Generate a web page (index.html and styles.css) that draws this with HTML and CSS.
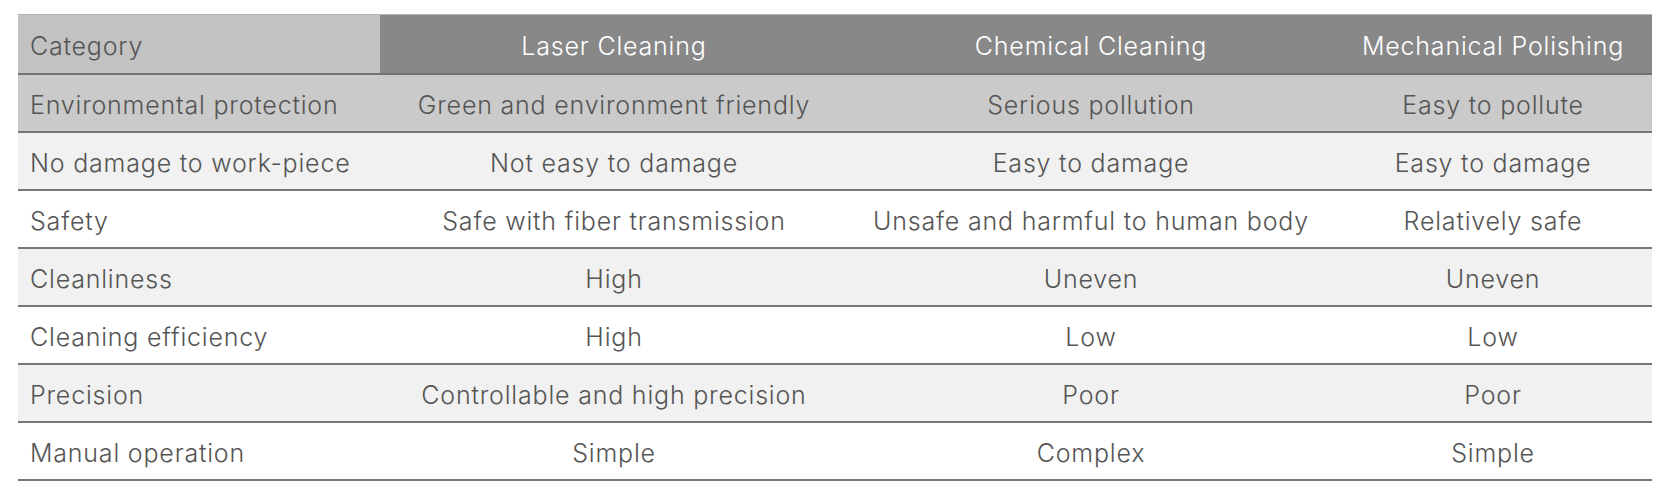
FILE: index.html
```html
<!DOCTYPE html>
<html lang="en">
<head>
<meta charset="utf-8">
<title>Cleaning comparison</title>
<link rel="stylesheet" href="styles.css">
</head>
<body>
<div class="page">
<table class="compare">
  <colgroup>
    <col class="c1"><col class="c2"><col class="c3"><col class="c4">
  </colgroup>
  <thead>
    <tr>
      <th class="cat">Category</th>
      <th>Laser Cleaning</th>
      <th>Chemical Cleaning</th>
      <th>Mechanical Polishing</th>
    </tr>
  </thead>
  <tbody>
    <tr class="first"><td>Environmental protection</td><td>Green and environment friendly</td><td>Serious pollution</td><td>Easy to pollute</td></tr>
    <tr class="alt"><td>No damage to work-piece</td><td>Not easy to damage</td><td>Easy to damage</td><td>Easy to damage</td></tr>
    <tr><td>Safety</td><td>Safe with fiber transmission</td><td>Unsafe and harmful to human body</td><td>Relatively safe</td></tr>
    <tr class="alt"><td>Cleanliness</td><td>High</td><td>Uneven</td><td>Uneven</td></tr>
    <tr><td>Cleaning efficiency</td><td>High</td><td>Low</td><td>Low</td></tr>
    <tr class="alt"><td>Precision</td><td>Controllable and high precision</td><td>Poor</td><td>Poor</td></tr>
    <tr><td>Manual operation</td><td>Simple</td><td>Complex</td><td>Simple</td></tr>
  </tbody>
</table>
</div>
</body>
</html>
```

FILE: styles.css
```css
html, body {
  margin: 0;
  padding: 0;
  background: #ffffff;
}

.page {
  padding: 14px 13px 0 18px;
}

.compare {
  width: 1634px;
  border-collapse: collapse;
  table-layout: fixed;
  font-family: Inter, "Noto Sans", sans-serif;
  font-weight: 300;
  font-size: 25px;
  letter-spacing: 0.8px;
  color: #555555;
}

.c1 { width: 362px; }
.c2 { width: 468px; }
.c3 { width: 486px; }
.c4 { width: 318px; }

.compare th,
.compare td {
  padding: 11.5px 12px 8.4px;
  line-height: 36.1px;
  text-align: center;
  white-space: nowrap;
  font-weight: 300;
}

.compare th:first-child,
.compare td:first-child {
  text-align: left;
}

.compare thead tr {
  border-top: 1px solid #b4b4b4;
  border-bottom: 2px solid #727272;
}

.compare th {
  background: #888888;
  color: #ffffff;
  line-height: 36.3px;
  padding-top: 13px;
  padding-bottom: 9px;
}

.compare th.cat {
  background: #c1c2c1;
  color: #555555;
}

.compare tbody tr {
  border-bottom: 2px solid #777777;
  background: #ffffff;
}

.compare tbody tr.first {
  background: #c9cac9;
}

.compare tbody tr.alt {
  background: #f0f1f0;
}
```
